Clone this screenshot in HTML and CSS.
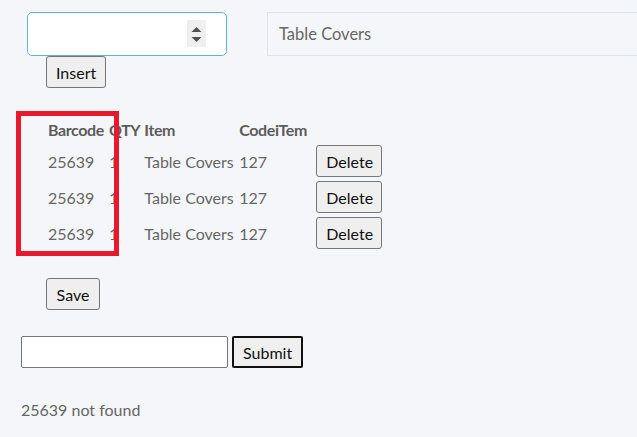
FILE: index.html
```html
<!DOCTYPE html>
<html lang="en">
<head>
  <meta charset="UTF-8">
  <meta name="viewport" content="width=device-width, initial-scale=1.0">
  <title>Scanner</title>
  <link rel="stylesheet" href="styles.css">
</head>
<body>

  <!-- Input barcode -->
  <div class="top-row">
    <div class="number-wrap">
      <input type="text" class="number-input" id="barcode">
      <span class="spinner">
        <svg width="19" height="27" viewBox="0 0 19 27">
          <rect width="19" height="27" fill="#efefef"/>
          <path d="M4.5 12 L9.5 7 L14.5 12 Z" fill="#505050"/>
          <path d="M4.5 17 L9.5 22 L14.5 17 Z" fill="#505050"/>
        </svg>
      </span>
    </div>
    <div class="item-box">Table Covers</div>
  </div>
  <button class="btn btn-insert">Insert</button>

  <!-- Tabel item -->
  <div class="table-wrap">
    <table class="items">
      <tr>
        <th class="col-barcode">Barcode</th>
        <th>QTY</th>
        <th class="col-item">Item</th>
        <th class="col-code">CodeiTem</th>
        <th></th>
      </tr>
      <tr>
        <td>25639</td>
        <td>1</td>
        <td>Table Covers</td>
        <td>127</td>
        <td><button class="btn btn-delete">Delete</button></td>
      </tr>
      <tr>
        <td>25639</td>
        <td>1</td>
        <td>Table Covers</td>
        <td>127</td>
        <td><button class="btn btn-delete">Delete</button></td>
      </tr>
      <tr>
        <td>25639</td>
        <td>1</td>
        <td>Table Covers</td>
        <td>127</td>
        <td><button class="btn btn-delete">Delete</button></td>
      </tr>
    </table>
    <div class="highlight"></div>
  </div>

  <button class="btn btn-save">Save</button>

  <form class="search-form" onsubmit="return false">
    <input type="text" class="search-input"><button class="btn btn-submit">Submit</button>
  </form>

  <p class="status">25639 not found</p>

</body>
</html>
```

FILE: styles.css
```css
* {
  box-sizing: border-box;
}

body {
  margin: 0;
  background-color: #f5f6fa;
  font-family: 'Lato', 'Liberation Sans', sans-serif;
  font-size: 16px;
  color: #666;
  overflow: hidden;
}

.top-row {
  display: flex;
  gap: 40px;
  padding: 12px 0 0 27px;
  overflow: hidden;
}

.number-wrap {
  position: relative;
  width: 200px;
  height: 44px;
}

.number-input {
  width: 100%;
  height: 100%;
  border: 1px solid #66afe9;
  border-radius: 5px;
  background: #fff;
  outline: none;
}

.spinner {
  position: absolute;
  top: 8px;
  left: 160px;
  line-height: 0;
}

.item-box {
  flex: 1;
  margin-right: -20px;
  height: 44px;
  padding: 0 11px;
  display: flex;
  align-items: center;
  border: 1px solid #dde3ea;
  font-size: 16.5px;
  color: #666;
}

.btn {
  font-family: inherit;
  font-size: 16px;
  color: #111;
  background-color: #efefef;
  border: 1px solid #767676;
  border-radius: 3px;
  height: 32px;
  padding: 0 9px;
  cursor: pointer;
}

.btn-insert {
  display: block;
  margin-left: 46px;
  width: 60px;
}

/* Tabel */
.table-wrap {
  position: relative;
  margin-top: 26px;
  padding-left: 45px;
}

.items {
  border-spacing: 2px;
}

.items th,
.items td {
  padding: 1px;
  white-space: nowrap;
}

.items th {
  text-align: left;
  font-weight: bold;
  letter-spacing: -0.4px;
  height: 26px;
  color: #5c5c5c;
}

.items td {
  color: #666;
}

.col-barcode { width: 59px; }
.col-item { width: 93px; }
.col-code { width: 75px; }

.btn-delete {
  width: 66px;
}

.highlight {
  position: absolute;
  left: 16px;
  top: -3px;
  width: 103px;
  height: 145px;
  border: 5px solid #e8192c;
}

.btn-save {
  display: block;
  margin: 26px 0 0 46px;
  width: 54px;
}

.search-form {
  margin: 26px 0 0 21px;
  display: flex;
  gap: 4px;
}

.search-input {
  width: 207px;
  height: 32px;
  border: 1px solid #767676;
  border-radius: 2px;
  background: #fff;
}

.btn-submit {
  width: 71px;
  border: 2px solid #101010;
  border-radius: 2px;
}

.status {
  margin: 32px 0 0 21px;
  color: #666;
}
```
